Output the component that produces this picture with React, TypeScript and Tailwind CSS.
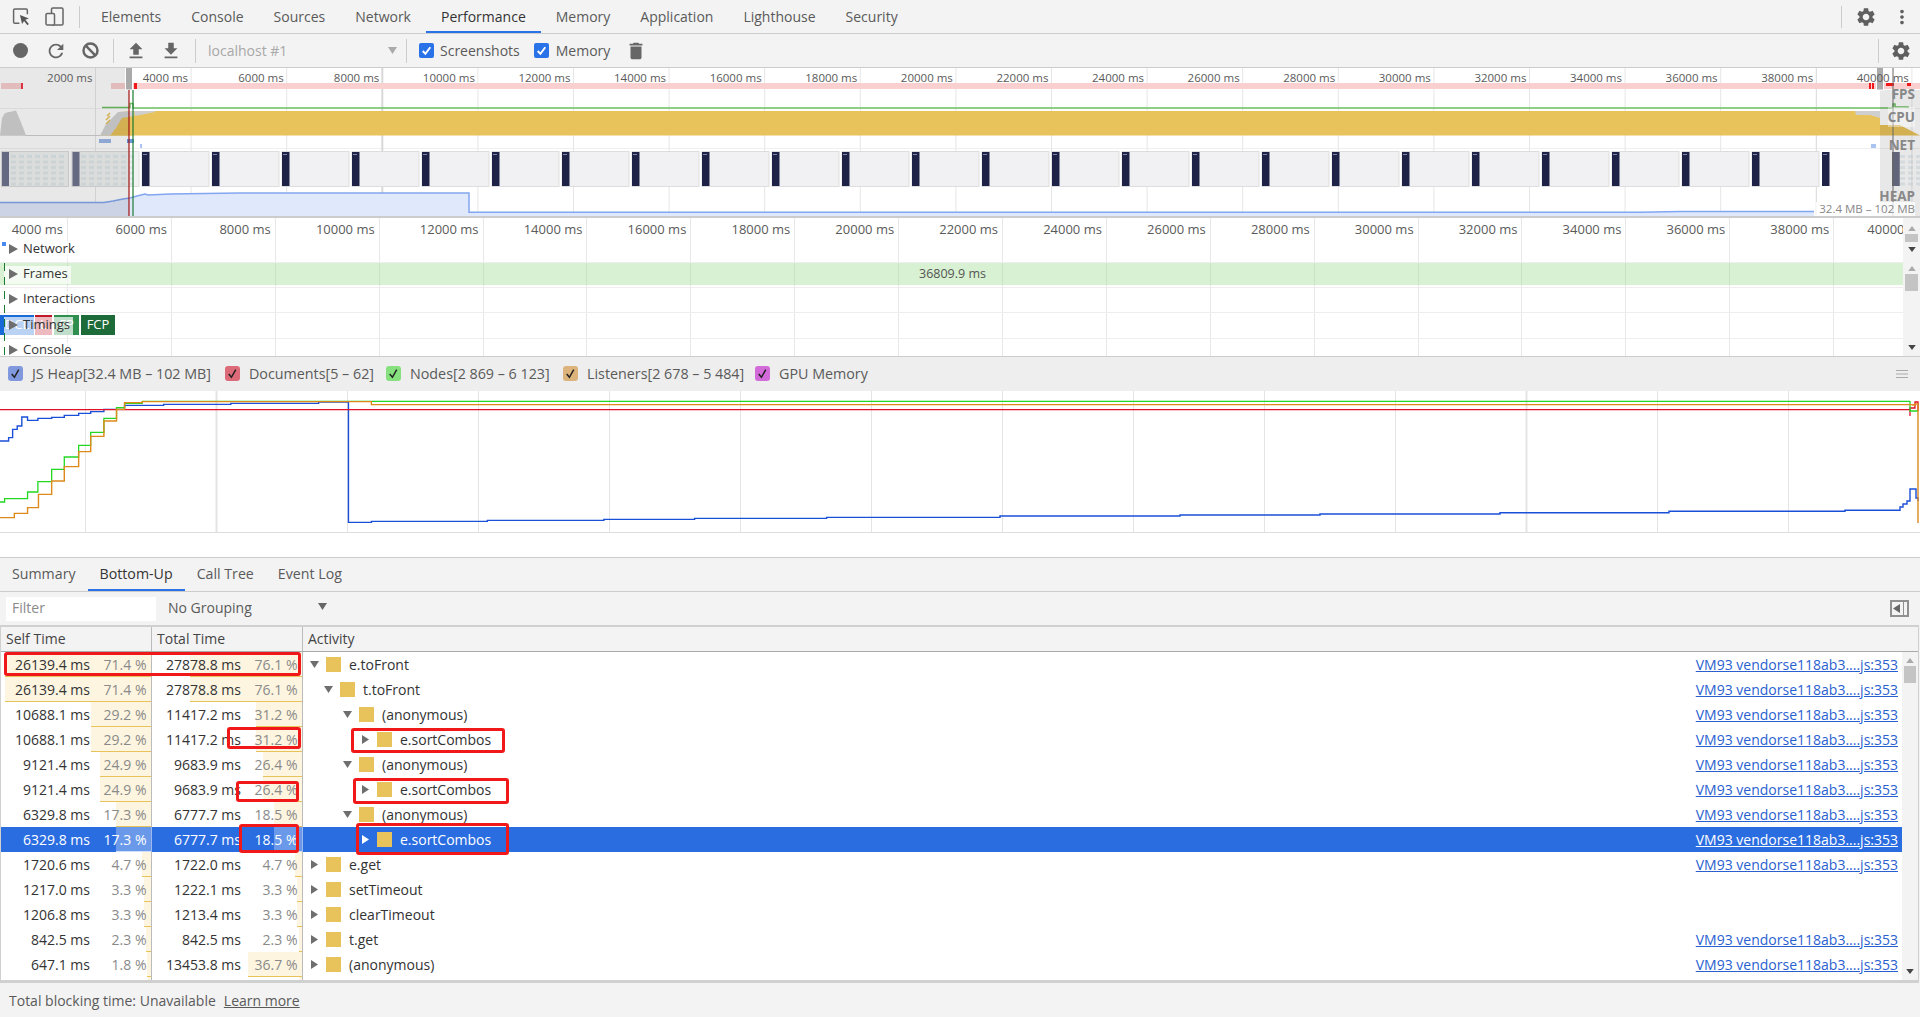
import React from "react";
import {
  MdSettings,
  MdMoreVert,
  MdRefresh,
  MdFileUpload,
  MdFileDownload,
  MdDelete,
} from "react-icons/md";

const tabs = ["Elements", "Console", "Sources", "Network", "Performance", "Memory", "Application", "Lighthouse", "Security"];

const overviewLabels = [2000, 4000, 6000, 8000, 10000, 12000, 14000, 16000, 18000, 20000, 22000, 24000, 26000, 28000, 30000, 32000, 34000, 36000, 38000, 40000];
const mainLabels = overviewLabels.slice(1);

// pairs are [x, y] read off the reference, joined as a stepped line
const step = (pts: number[][]) =>
  pts
    .map(([x, y], i) => {
      if (i === 0) return `M${x} ${y}`;
      return `H${x} V${y}`;
    })
    .join(" ");

const zx = (x: number) => x / 1.742;
const zy = (y: number) => 215 + y / 3;
const zoomed = (pts: number[][]) => pts.map(([x, y]) => [zx(x), zy(y)]);

const greenLine = [
  ...zoomed([[0, 858], [8, 848], [48, 828], [66, 797], [90, 760], [112, 723], [137, 688], [158, 649], [181, 607], [203, 575], [217, 562], [248, 556]]),
  [1910, 400],
  [1910, 410],
  [1918, 410],
];
const orangeLine = [
  ...zoomed([[0, 905], [25, 892], [48, 875], [67, 835], [90, 795], [112, 752], [137, 707], [158, 661], [181, 615], [203, 580], [217, 560], [248, 557], [647, 566]]),
  [1913, 404],
  [1915, 403],
  [1918, 403],
  [1918, 522],
];
const blueLine = [
  ...zoomed([[0, 675], [15, 665], [22, 640], [30, 630], [38, 603], [48, 613], [66, 607], [90, 604], [112, 598], [137, 592], [158, 587], [181, 580], [217, 568], [285, 565], [402, 562], [555, 558], [607, 919], [647, 916], [849, 913], [1052, 910], [1210, 907], [1440, 904]]),
  [1000, 515],
  [1180, 514],
  [1320, 513],
  [1500, 511.7],
  [1669, 510.3],
  [1845, 509.3],
  [1900, 506],
  [1903, 503],
  [1907, 500],
  [1910, 488],
  [1916, 497],
  [1918, 500],
];

type Row = {
  self: string;
  selfPct: string;
  selfBar: number;
  total: string;
  totalPct: string;
  totalBar: number;
  depth: number;
  open?: boolean;
  name: string;
  link?: boolean;
  selected?: boolean;
};

const rows: Row[] = [
  { self: "26139.4 ms", selfPct: "71.4 %", selfBar: 146, total: "27878.8 ms", totalPct: "76.1 %", totalBar: 112, depth: 0, open: true, name: "e.toFront", link: true },
  { self: "26139.4 ms", selfPct: "71.4 %", selfBar: 146, total: "27878.8 ms", totalPct: "76.1 %", totalBar: 112, depth: 1, open: true, name: "t.toFront", link: true },
  { self: "10688.1 ms", selfPct: "29.2 %", selfBar: 60, total: "11417.2 ms", totalPct: "31.2 %", totalBar: 46, depth: 2, open: true, name: "(anonymous)", link: true },
  { self: "10688.1 ms", selfPct: "29.2 %", selfBar: 60, total: "11417.2 ms", totalPct: "31.2 %", totalBar: 46, depth: 3, name: "e.sortCombos", link: true },
  { self: "9121.4 ms", selfPct: "24.9 %", selfBar: 51, total: "9683.9 ms", totalPct: "26.4 %", totalBar: 39, depth: 2, open: true, name: "(anonymous)", link: true },
  { self: "9121.4 ms", selfPct: "24.9 %", selfBar: 51, total: "9683.9 ms", totalPct: "26.4 %", totalBar: 39, depth: 3, name: "e.sortCombos", link: true },
  { self: "6329.8 ms", selfPct: "17.3 %", selfBar: 35, total: "6777.7 ms", totalPct: "18.5 %", totalBar: 28, depth: 2, open: true, name: "(anonymous)", link: true },
  { self: "6329.8 ms", selfPct: "17.3 %", selfBar: 35, total: "6777.7 ms", totalPct: "18.5 %", totalBar: 28, depth: 3, name: "e.sortCombos", link: true, selected: true },
  { self: "1720.6 ms", selfPct: "4.7 %", selfBar: 9, total: "1722.0 ms", totalPct: "4.7 %", totalBar: 7, depth: 0, name: "e.get", link: true },
  { self: "1217.0 ms", selfPct: "3.3 %", selfBar: 7, total: "1222.1 ms", totalPct: "3.3 %", totalBar: 5, depth: 0, name: "setTimeout" },
  { self: "1206.8 ms", selfPct: "3.3 %", selfBar: 7, total: "1213.4 ms", totalPct: "3.3 %", totalBar: 5, depth: 0, name: "clearTimeout" },
  { self: "842.5 ms", selfPct: "2.3 %", selfBar: 5, total: "842.5 ms", totalPct: "2.3 %", totalBar: 3, depth: 0, name: "t.get", link: true },
  { self: "647.1 ms", selfPct: "1.8 %", selfBar: 4, total: "13453.8 ms", totalPct: "36.7 %", totalBar: 54, depth: 0, name: "(anonymous)", link: true },
];

const depthPad = ["pl-[5px]", "pl-[19px]", "pl-[38px]", "pl-[56px]"];

const counters = [
  { label: "JS Heap[32.4 MB – 102 MB]", box: "bg-[#8098dd]", width: "w-[217px]" },
  { label: "Documents[5 – 62]", box: "bg-[#dd6a78]", width: "w-[161px]" },
  { label: "Nodes[2 869 – 6 123]", box: "bg-[#86e07e]", width: "w-[177px]" },
  { label: "Listeners[2 678 – 5 484]", box: "bg-[#dcb37a]", width: "w-[192px]" },
  { label: "GPU Memory", box: "bg-[#d26bd9]", width: "" },
];

function BlueCheck() {
  return (
    <span className="flex h-[15px] w-[15px] items-center justify-center rounded-[2px] bg-[#2a72e8]">
      <svg viewBox="0 0 12 12" className="h-[13px] w-[13px]">
        <path d="M2.5 6.5 5 9l4.5-6" fill="none" stroke="#fff" strokeWidth="1.8" />
      </svg>
    </span>
  );
}

function Sep() {
  return <div className="h-[24px] w-px bg-[#ccc]" />;
}

function Triangle({ open, color }: { open?: boolean; color: string }) {
  return open ? (
    <svg viewBox="0 0 9 7" className="h-[7px] w-[9px]" fill={color}>
      <path d="M0 0h9L4.5 7z" />
    </svg>
  ) : (
    <svg viewBox="0 0 7 9" className="h-[9px] w-[7px]" fill={color}>
      <path d="M0 0l7 4.5L0 9z" />
    </svg>
  );
}

function TabBar() {
  return (
    <div className="flex h-[34px] items-center border-b border-[#ccc] bg-[#f3f3f3] text-[14px] text-[#5a5a5a]">
      <svg viewBox="0 0 16 17" className="ml-[12px] h-[18px] w-[18px]">
        <path d="M6.5 14.5H2.2A1.2 1.2 0 0 1 1 13.3V2.2A1.2 1.2 0 0 1 2.2 1h10.6A1.2 1.2 0 0 1 14 2.2V6" fill="none" stroke="#666" strokeWidth="1.4" />
        <path d="M7 6.5l8.5 3.3-3.4 1.2 3.3 4-1.3 1.2-3.2-4L9 15z" fill="#555" />
      </svg>
      <svg viewBox="0 0 20 19" className="ml-[15px] h-[19px] w-[20px]">
        <rect x="6.5" y="1" width="11.5" height="17" rx="1.3" fill="none" stroke="#666" strokeWidth="1.5" />
        <rect x="1" y="6.5" width="8.5" height="11.5" rx="1.3" fill="#f3f3f3" stroke="#666" strokeWidth="1.5" />
      </svg>
      <div className="ml-[14px] mr-[6px] h-[22px] w-px bg-[#ccc]" />
      {tabs.map((t) => (
        <div
          key={t}
          className={
            t === "Performance"
              ? "flex h-[33px] items-center border-b-[2px] border-[#2a72e8] px-[15px] pt-[2px] text-[#333]"
              : "flex h-[33px] items-center border-b-[2px] border-transparent px-[15px] pt-[2px]"
          }
        >
          {t}
        </div>
      ))}
      <div className="flex-1" />
      <div className="h-[22px] w-px bg-[#ccc]" />
      <MdSettings className="ml-[13px] h-[22px] w-[22px] text-[#5f5f5f]" />
      <MdMoreVert className="ml-[14px] mr-[7px] h-[22px] w-[22px] text-[#5f5f5f]" />
    </div>
  );
}

function Toolbar() {
  return (
    <div className="flex h-[34px] items-center border-b border-[#ccc] bg-[#f3f3f3] text-[14px] text-[#5a5a5a]">
      <div className="ml-[13px] h-[15px] w-[15px] rounded-full bg-[#666]" />
      <MdRefresh className="ml-[17px] h-[22px] w-[22px] text-[#666]" />
      <svg viewBox="0 0 16 16" className="ml-[15px] h-[17px] w-[17px]">
        <circle cx="8" cy="8" r="6.6" fill="none" stroke="#666" strokeWidth="2.3" />
        <path d="M3.5 3.5l9 9" stroke="#666" strokeWidth="2.3" />
      </svg>
      <div className="ml-[14px]">
        <Sep />
      </div>
      <MdFileUpload className="ml-[11px] h-[22px] w-[22px] text-[#666]" />
      <MdFileDownload className="ml-[13px] h-[22px] w-[22px] text-[#666]" />
      <div className="ml-[13px]">
        <Sep />
      </div>
      <div className="ml-[12px] flex w-[198px] items-center justify-between pr-[9px] text-[#a8a8a8]">
        <span>localhost #1</span>
        <Triangle open color="#aaa" />
      </div>
      <Sep />
      <div className="ml-[12px] flex items-center gap-[6px]">
        <BlueCheck />
        <span>Screenshots</span>
      </div>
      <div className="ml-[14px] flex items-center gap-[7px]">
        <BlueCheck />
        <span>Memory</span>
      </div>
      <MdDelete className="ml-[15px] h-[22px] w-[22px] text-[#666]" />
      <div className="flex-1" />
      <Sep />
      <MdSettings className="ml-[11px] mr-[8px] h-[22px] w-[22px] text-[#5f5f5f]" />
    </div>
  );
}

function Overview() {
  const frames = Array.from({ length: 26 }, (_, i) => 141.5 + 70 * i);
  const lines = Array.from({ length: 20 }, (_, i) => 95.5 + 95.6 * i);
  const dots: number[][] = [];
  for (const base of [11, 81, 1900]) {
    for (let c = 0; c < 7; c++) {
      for (let r = 0; r < 6; r++) {
        dots.push([base + c * 8, 155 + r * 5.5]);
      }
    }
  }
  return (
    <div className="relative h-[150px] overflow-hidden border-b-2 border-[#ccc] bg-white">
      <svg viewBox="0 68 1920 148" className="absolute inset-x-0 top-0 h-[148px] w-[1920px]">
        <path d="M0 108.5H1920M0 148.5H1920" stroke="#f0f0f0" />
        {lines.map((x, i) => (
          <path key={x} d={`M${x} 68V216`} stroke={i === 3 || i === 18 ? "#d8d8d8" : "#e6e6e6"} strokeWidth={i === 3 ? 2 : 1} />
        ))}
        <rect x="1" y="83" width="22" height="6" fill="#f9cfcf" />
        <rect x="21" y="83" width="2" height="6" fill="#f03a4a" />
        <rect x="111" y="83" width="1809" height="6" fill="#f9cfcf" />
        <rect x="134" y="83" width="3" height="6" fill="#f01818" />
        <path d="M1869 83h2v6h-2zM1872 83h2v6h-2zM1886 83h8v3h-8zM1907 83h4v3h-4z" fill="#f01818" />
        <path d="M102 107.5H130V103.5H133V108H1893V104H1895V107H1908V108" fill="none" stroke="#6cc060" strokeWidth="1.5" />
        <path d="M25 135.5H100" stroke="#cfcfcf" />
        <path d="M0 135.7L2 118L5 113L16 110.6L20 120L24 130L26 135.7Z" fill="#d4d4d4" />
        <path d="M100 135.7L108 132L115 120L120 112L134 111V135.7Z" fill="#e8c25a" />
        <path d="M100 135.7L106 124L112 118L118 112L134 111V116L122 118L116 128L110 135.7Z" fill="#d4d4d4" />
        <path d="M106 124L110 120M106 120L110 116M107 116L110 113" stroke="#e8c25a" strokeWidth="1.5" />
        <path d="M134 111H1880V135.5H134Z" fill="#e8c25a" />
        <path d="M134 111H155V112L135 116ZM1855 111H1880V118L1870 115H1856Z" fill="#cfcfcf" />
        <path d="M1880 125L1900 125L1920 135.5H1880Z" fill="#e8c25a" />
        <rect x="99" y="139" width="12" height="4" fill="#9db8e8" />
        <rect x="127" y="139" width="7" height="4" fill="#6c9ce0" />
        <rect x="140" y="144" width="2" height="4" fill="#a9c4f0" />
        <rect x="1871" y="144" width="5" height="4" fill="#a9c4f0" />
        {[1, 71.5].map((x) => (
          <g key={x}>
            <rect x={x + 0.5} y="151.5" width="67" height="35" fill="#f1f3f3" stroke="#ddd" />
            <rect x={x + 1} y="152" width="7" height="34" fill="#70748e" />
          </g>
        ))}
        {frames.map((x, i) => (
          <g key={x}>
            {i < 24 && <rect x={x + 0.5} y="151.5" width="67" height="35" fill="#f1f1f3" stroke="#ddd" />}
            <rect x={x + 0.5} y="152" width="7.5" height="34" fill="#1f2247" />
            <rect x={x + 1.5} y="154" width="4" height="1" fill="#8088aa" />
          </g>
        ))}
        <rect x="1892" y="152" width="7" height="34" fill="#6c7086" />
        {dots.map(([x, y]) => (
          <rect key={`${x}-${y}`} x={x} y={y} width="5" height="3" fill="#c4d4dc" opacity="0.35" />
        ))}
        <path d="M0 216V202.5H104L113 201L123 199L130 198L137 196L145 194L148 195L170 194L240 193H469V212.3H1640L1680 211.5H1814V216Z" fill="#e0e8fb" />
        <path d="M0 202.5H104L113 201L123 199L130 198L137 196L145 194L148 195L170 194L240 193H469V212.3H1640L1680 211.5H1814" fill="none" stroke="#83a6f0" strokeWidth="1.5" />
        <rect x="0" y="68" width="129" height="148" fill="#000" opacity="0.09" />
        <rect x="1880" y="90" width="40" height="126" fill="#000" opacity="0.09" />
        <rect x="125.5" y="67" width="7" height="23" fill="#aaa" stroke="#fff" />
        <rect x="1876.5" y="67" width="7" height="23" fill="#aaa" stroke="#fff" />
        <path d="M129 90V216" stroke="#a01010" strokeWidth="1.2" />
        <path d="M133 90V216" stroke="#1a7a30" strokeWidth="1.2" />
        <path d="M1893 68V216" stroke="#666" strokeWidth="1" />
      </svg>
      <div className="absolute inset-x-0 top-0 flex h-[20px] text-[11.5px] leading-[19px] text-[#5a5a5a]">
        {overviewLabels.map((l, i) => (
          <div key={l} className="shrink-0 whitespace-nowrap pr-[3px] text-right" style={{ width: i === 0 ? 95.5 : 95.6 }}>
            {l} ms
          </div>
        ))}
      </div>
      <div className="absolute right-[5px] top-[16px] text-[13.5px] font-bold text-[#888]">FPS</div>
      <div className="absolute right-[5px] top-[39px] bg-white/40 text-[13.5px] font-bold text-[#888]">CPU</div>
      <div className="absolute right-[5px] top-[67px] text-[13.5px] font-bold text-[#888]">NET</div>
      <div className="absolute right-[5px] top-[119px] text-[13.5px] font-bold leading-[18px] text-[#888]">HEAP</div>
      <div className="absolute right-[5px] top-[134px] whitespace-nowrap bg-white/80 pl-[3px] text-[11.5px] leading-[14px] text-[#888]">32.4 MB – 102 MB</div>
    </div>
  );
}

function Track({ name, className, children }: { name: string; className: string; children?: React.ReactNode }) {
  return (
    <div className={`relative flex shrink-0 items-center border-b border-[#eee] ${className}`}>
      {children}
      <div className="relative ml-[4px] flex h-[18px] items-center gap-[5px] bg-white/70 pb-[2px] pl-[5px] pr-[3px] text-[13px] text-[#333]">
        <svg viewBox="0 0 9 10" className="h-[10px] w-[9px]" fill="#6e6e6e">
          <path d="M0 0l9 5-9 5z" />
        </svg>
        <span>{name}</span>
      </div>
    </div>
  );
}

function Tracks() {
  return (
    <div className="relative h-[139px] shrink-0 overflow-hidden border-b border-[#ccc] bg-white">
      <div className="absolute inset-0 flex text-[13px] leading-[23px] text-[#5a5a5a]">
        {mainLabels.map((l, i) => (
          <div
            key={l}
            className="h-full shrink-0 whitespace-nowrap border-r border-[#e8e8e8] pr-[4px] text-right"
            style={{ width: i === 0 ? 68 : i === 18 ? 97 : 103.9 }}
          >
            {l} ms
          </div>
        ))}
      </div>
      <div className="relative flex h-full flex-col pt-[20px]">
        <Track name="Network" className="h-[25px]" />
        <Track name="Frames" className="h-[25px]">
          <div className="absolute inset-x-0 bottom-[2px] top-0 flex items-center justify-center bg-[#8ed67e]/35 pr-[15px] pt-[1px] text-[12.5px] text-[#555]">
            36809.9 ms
          </div>
        </Track>
        <Track name="Interactions" className="h-[25px]" />
        <Track name="Timings" className="h-[26px]">
          <div className="absolute left-0 top-[2px] flex h-[20px] text-[13px] text-white">
            <div className="flex w-[34px] items-center justify-center bg-[#1a6ad8]">DCL</div>
            <div className="ml-px flex w-[17px] items-center justify-center bg-[#c01828]">L</div>
            <div className="ml-[2px] flex w-[25px] items-center justify-center bg-[#2f8f4f]">FP</div>
            <div className="ml-[2px] flex w-[34px] items-center justify-center bg-[#1e6b3a]">FCP</div>
          </div>
        </Track>
        <Track name="Console" className="h-[25px]" />
      </div>
      <div className="absolute bottom-0 right-0 top-0 flex w-[17px] flex-col items-center bg-[#f3f3f3]">
        <svg viewBox="0 0 9 6" className="mt-[8px] h-[5px] w-[8px]" fill="#aaa">
          <path d="M0 6l4.5-6L9 6z" />
        </svg>
        <div className="mt-[3px] h-[8px] w-[13px] bg-[#c4c4c4]" />
        <svg viewBox="0 0 9 6" className="mt-[5px] h-[5px] w-[8px]" fill="#444">
          <path d="M0 0l4.5 6L9 0z" />
        </svg>
        <svg viewBox="0 0 9 6" className="mt-[14px] h-[5px] w-[8px]" fill="#aaa">
          <path d="M0 6l4.5-6L9 6z" />
        </svg>
        <div className="mt-[3px] h-[17px] w-[13px] bg-[#c4c4c4]" />
        <div className="flex-1" />
        <svg viewBox="0 0 9 6" className="mb-[6px] h-[5px] w-[8px]" fill="#444">
          <path d="M0 0l4.5 6L9 0z" />
        </svg>
      </div>
      <svg className="absolute left-[3px] top-[45px] h-[94px] w-[3px]">
        <path d="M1.5 0V94" stroke="#1a7a30" strokeDasharray="8 6" />
      </svg>
      <div className="absolute left-[2px] top-[24px] h-[4px] w-[4px] bg-[#4a8af0]" />
    </div>
  );
}

function CounterBar() {
  return (
    <div className="flex h-[34px] shrink-0 items-center bg-[#eee] pb-[1px] pl-[8px] text-[14.3px] text-[#5a5a5a]">
      {counters.map((c) => (
        <div key={c.label} className={`flex items-center gap-[9px] ${c.width}`}>
          <span className={`flex h-[15px] w-[15px] items-center justify-center rounded-[3px] ${c.box}`}>
            <svg viewBox="0 0 12 12" className="h-[13px] w-[13px]">
              <path d="M2.5 6.5 5 9.5l4-7" fill="none" stroke="#222" strokeWidth="1.4" />
            </svg>
          </span>
          <span>{c.label}</span>
        </div>
      ))}
      <div className="flex-1" />
      <svg viewBox="0 0 12 8" className="mr-[12px] h-[8px] w-[12px]">
        <path d="M0 .5h12M0 4h12M0 7.5h12" stroke="#aaa" />
      </svg>
    </div>
  );
}

function CounterGraph() {
  const ticks = Array.from({ length: 14 }, (_, i) => 85.5 + 131 * i);
  return (
    <div className="h-[167px] shrink-0 border-b border-[#ccc] bg-white">
      <div className="border-b border-[#ddd]">
        <svg viewBox="0 390 1920 141" className="block h-[141px] w-[1920px]">
          {ticks.map((x, i) => (
            <path key={x} d={`M${x} 390V531`} stroke="#e4e4e4" strokeWidth={i === 1 || i === 11 ? 2 : 1} />
          ))}
          <path d={step(blueLine)} fill="none" stroke="#1a4fd8" strokeWidth="1.4" />
          <path d="M0 408.7H1910V415V407H1915V401H1918V410" fill="none" stroke="#e0102a" strokeWidth="1.3" />
          <path d={step(greenLine)} fill="none" stroke="#22d822" strokeWidth="1.3" />
          <path d={step(orangeLine)} fill="none" stroke="#de8a1a" strokeWidth="1.4" />
        </svg>
      </div>
    </div>
  );
}

function DetailTabs() {
  const items = ["Summary", "Bottom-Up", "Call Tree", "Event Log"];
  return (
    <div className="flex h-[34px] shrink-0 items-center border-b border-[#ccc] bg-[#f3f3f3] text-[14.2px] text-[#5a5a5a]">
      {items.map((t) => (
        <div
          key={t}
          className={
            t === "Bottom-Up"
              ? "flex h-[33px] items-center border-b-[2px] border-[#2a72e8] px-[12px] text-[#333]"
              : "flex h-[33px] items-center border-b-[2px] border-transparent px-[12px]"
          }
        >
          {t}
        </div>
      ))}
    </div>
  );
}

function FilterBar() {
  return (
    <div className="flex h-[33px] shrink-0 items-center bg-[#f3f3f3] text-[14px] text-[#5a5a5a]">
      <div className="ml-[6px] flex h-[24px] w-[150px] items-center bg-white pb-[2px] pl-[6px] text-[#8a8a8a]">Filter</div>
      <span className="mb-[2px] ml-[12px]">No Grouping</span>
      <div className="mb-[4px] ml-[66px]">
        <Triangle open color="#666" />
      </div>
      <div className="flex-1" />
      <div className="mr-[11px] flex h-[17px] w-[19px] items-center border-2 border-[#909090]">
        <svg viewBox="0 0 7 9" className="ml-[1px] h-[9px] w-[7px]" fill="#666">
          <path d="M7 0L0 4.5 7 9z" />
        </svg>
        <div className="ml-auto mr-[3px] h-full w-px bg-[#909090]" />
      </div>
    </div>
  );
}

function PctCell({ ms, pct, bar, selected }: { ms: string; pct: string; bar: number; selected?: boolean }) {
  return (
    <div className={`relative flex h-full w-[151px] shrink-0 items-center justify-end border-r ${selected ? "border-[#9db8ee]" : "border-[#bbb]"}`}>
      <div
        className={
          selected
            ? "absolute inset-y-0 right-0 border-b-[1.5px] border-[#cfe0fb] bg-white/30"
            : "absolute inset-y-0 right-0 border-b-[1.5px] border-[#e8c25a] bg-[#fdf5e0]"
        }
        style={{ width: bar }}
      />
      <span className="relative">{ms}</span>
      <span className={`relative w-[61px] pr-[4.5px] text-right ${selected ? "text-white" : "text-[#8a8a8a]"}`}>{pct}</span>
    </div>
  );
}

function TableRow({ r }: { r: Row }) {
  return (
    <div className={`flex h-[25px] shrink-0 items-center ${r.selected ? "bg-[#2a6de0] text-white" : "text-[#333]"}`}>
      <PctCell ms={r.self} pct={r.selfPct} bar={r.selfBar} selected={r.selected} />
      <PctCell ms={r.total} pct={r.totalPct} bar={r.totalBar} selected={r.selected} />
      <div className={`flex min-w-0 flex-1 items-center pr-[4px] ${depthPad[r.depth]}`}>
        <div className="flex w-[18px] justify-center pr-[5px]">
          <Triangle open={r.open} color={r.selected ? "#fff" : "#6e6e6e"} />
        </div>
        <div className="h-[15px] w-[15px] bg-[#e8c25a]" />
        <span className="ml-[8px]">{r.name}</span>
        <div className="flex-1" />
        {r.link && (
          <span className={`underline ${r.selected ? "text-white" : "text-[#2a5fd0]"}`}>VM93 vendorse118ab3....js:353</span>
        )}
      </div>
    </div>
  );
}

function Table() {
  return (
    <div className="mr-px flex h-[358px] shrink-0 flex-col border border-b-[3px] border-t-2 border-[#d0d0d0] text-[14px]">
      <div className="flex h-[25px] shrink-0 items-center border-b border-[#aaa] bg-[#f3f3f3] text-[#444]">
        <div className="flex h-full w-[151px] shrink-0 items-center border-r border-[#bbb] pb-[2px] pl-[5px]">Self Time</div>
        <div className="flex h-full w-[151px] shrink-0 items-center border-r border-[#bbb] pb-[2px] pl-[5px]">Total Time</div>
        <div className="pb-[2px] pl-[5px]">Activity</div>
      </div>
      <div className="relative flex min-h-0 flex-1 bg-white">
        <div className="flex min-w-0 flex-1 flex-col overflow-hidden">
          {rows.map((r, i) => (
            <TableRow key={i} r={r} />
          ))}
          <div className="flex h-[25px] shrink-0">
            <div className="relative w-[151px] border-r border-[#bbb]">
              <div className="absolute inset-y-0 right-0 w-[3px] bg-[#fdf5e0]" />
            </div>
            <div className="relative w-[151px] border-r border-[#bbb]">
              <div className="absolute inset-y-0 right-0 w-[3px] bg-[#fdf5e0]" />
            </div>
          </div>
        </div>
        <div className="flex w-[16px] shrink-0 flex-col items-center bg-[#f3f3f3]">
          <svg viewBox="0 0 9 6" className="mt-[6px] h-[5px] w-[8px]" fill="#aaa">
            <path d="M0 6l4.5-6L9 6z" />
          </svg>
          <div className="mt-[3px] h-[17px] w-[12px] bg-[#c4c4c4]" />
          <div className="flex-1" />
          <svg viewBox="0 0 9 6" className="mb-[6px] h-[5px] w-[8px]" fill="#444">
            <path d="M0 0l4.5 6L9 0z" />
          </svg>
        </div>
        <div className="absolute left-[3px] top-0 h-[24px] w-[297px] rounded-[3px] border-[3px] border-[#f01818]" />
        <div className="absolute left-[226px] top-[75px] h-[22px] w-[74px] rounded-[3px] border-[3px] border-[#f01818]" />
        <div className="absolute left-[235px] top-[129px] h-[21px] w-[63px] rounded-[3px] border-[3px] border-[#f01818]" />
        <div className="absolute left-[238px] top-[172px] h-[29px] w-[60px] rounded-[3px] border-[3px] border-[#f01818]" />
        <div className="absolute left-[350px] top-[76px] h-[25px] w-[154px] rounded-[3px] border-[3px] border-[#f01818]" />
        <div className="absolute left-[352px] top-[126px] h-[26px] w-[156px] rounded-[3px] border-[3px] border-[#f01818]" />
        <div className="absolute left-[355px] top-[171px] h-[32px] w-[153px] rounded-[3px] border-[3px] border-[#f01818]" />
      </div>
    </div>
  );
}

export default function App() {
  return (
    <div className="flex h-[1017px] w-[1920px] flex-col overflow-hidden bg-[#f3f3f3] font-['Open_Sans',sans-serif]">
      <TabBar />
      <Toolbar />
      <Overview />
      <Tracks />
      <CounterBar />
      <CounterGraph />
      <DetailTabs />
      <FilterBar />
      <Table />
      <div className="flex flex-1 items-center pl-[9px] text-[14px] text-[#5a5a5a]">
        <span>Total blocking time: Unavailable</span>
        <span className="ml-[8px] underline">Learn more</span>
      </div>
    </div>
  );
}
